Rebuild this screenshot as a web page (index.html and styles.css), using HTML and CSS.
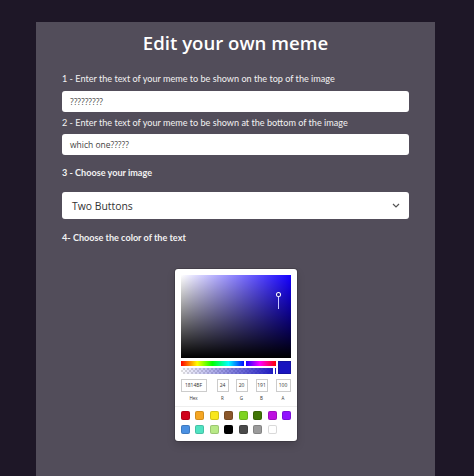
FILE: index.html
```html
<!DOCTYPE html>
<html lang="en">
<head>
  <meta charset="UTF-8">
  <title>Edit your own meme</title>
  <link rel="stylesheet" href="styles.css">
</head>
<body>
  <div class="panel">
    <h1>Edit your own meme</h1>

    <label class="field-label">1 - Enter the text of your meme to be shown on the top of the image</label>
    <div class="text-input">?????????</div>

    <label class="field-label second">2 - Enter the text of your meme to be shown at the bottom of the image</label>
    <div class="text-input">which one?????</div>

    <label class="field-label bold choose">3 - Choose your image</label>
    <div class="select">
      <span>Two Buttons</span>
      <svg width="8" height="5" viewBox="0 0 8 5"><path d="M1 1l3 3 3-3" fill="none" stroke="#555" stroke-width="1.2"/></svg>
    </div>

    <label class="field-label bold color">4- Choose the color of the text</label>

    <div class="picker">
      <div class="saturation">
        <div class="sat-white"></div>
        <div class="sat-black"></div>
        <div class="sat-pointer"></div>
        <div class="sat-line"></div>
      </div>
      <div class="controls">
        <div class="sliders">
          <div class="hue"><div class="hue-pointer"></div></div>
          <div class="alpha"><div class="alpha-fill"></div><div class="alpha-pointer"></div></div>
        </div>
        <div class="active-color"></div>
      </div>
      <div class="fields">
        <div class="f hex"><div class="box">1814BF</div><span>Hex</span></div>
        <div class="f r"><div class="box">24</div><span>R</span></div>
        <div class="f g"><div class="box">20</div><span>G</span></div>
        <div class="f b"><div class="box">191</div><span>B</span></div>
        <div class="f a"><div class="box">100</div><span>A</span></div>
      </div>
      <div class="presets">
        <div class="sw" style="background:#D0021B"></div>
        <div class="sw" style="background:#F5A623"></div>
        <div class="sw" style="background:#F8E71C"></div>
        <div class="sw" style="background:#8B572A"></div>
        <div class="sw" style="background:#7ED321"></div>
        <div class="sw" style="background:#417505"></div>
        <div class="sw" style="background:#BD10E0"></div>
        <div class="sw" style="background:#9013FE"></div>
        <div class="sw" style="background:#4A90E2"></div>
        <div class="sw" style="background:#50E3C2"></div>
        <div class="sw" style="background:#B8E986"></div>
        <div class="sw" style="background:#000000"></div>
        <div class="sw" style="background:#4A4A4A"></div>
        <div class="sw" style="background:#9B9B9B"></div>
        <div class="sw" style="background:#FFFFFF"></div>
      </div>
    </div>
  </div>
</body>
</html>
```

FILE: styles.css
```css
html, body {
  margin: 0;
  height: 100%;
  overflow: hidden;
}
body {
  background-color: #1e1727;
  font-family: "Open Sans", "Noto Sans", sans-serif;
}
.panel {
  width: 347px;
  margin: 22px 0 0 36px;
  padding: 6px 26px 60px;
  background-color: #524d5a;
  min-height: 500px;
}
h1 {
  margin: 0 0 14px;
  color: #fff;
  font-size: 18.6px;
  font-weight: 600;
  text-align: center;
  line-height: 30px;
}
.field-label {
  display: block;
  color: #f2f2f2;
  font-family: Lato, "Open Sans", sans-serif;
  font-size: 9.1px;
  line-height: 14px;
  margin-bottom: 5px;
}
.field-label.second { margin-top: 4px; margin-bottom: 4px; }
.field-label.bold { font-weight: 700; }
.field-label.choose { margin-top: 11px; margin-bottom: 12px; }
.field-label.color { margin-top: 12px; }
.text-input {
  height: 21px;
  background: #fff;
  border-radius: 3px;
  color: #444;
  font-size: 8.5px;
  line-height: 21px;
  padding-left: 8px;
}
.select {
  height: 27px;
  background: #fff;
  border-radius: 3px;
  display: flex;
  align-items: center;
  justify-content: space-between;
  padding: 0 9px 0 10px;
  color: #333;
  font-size: 10.4px;
}
.picker {
  width: 110px;
  margin: 24px auto 0;
  padding: 6px 6px 0;
  background: #fff;
  border-radius: 3px;
  box-shadow: 0 0 0 1px rgba(0,0,0,0.15), 0 4px 8px rgba(0,0,0,0.15);
}
.saturation {
  position: relative;
  height: 83px;
  background: #1400ff;
  overflow: hidden;
}
.sat-white, .sat-black {
  position: absolute;
  inset: 0;
}
.sat-white { background: linear-gradient(to right, #fff, rgba(255,255,255,0)); }
.sat-black { background: linear-gradient(to top, #000, rgba(0,0,0,0)); }
.sat-pointer {
  position: absolute;
  left: 96px;
  top: 18px;
  width: 3px;
  height: 3px;
  border-radius: 50%;
  box-shadow: 0 0 0 1px #fff, inset 0 0 1px 1px rgba(0,0,0,0.3);
}
.sat-line {
  position: absolute;
  left: 97px;
  top: 22px;
  width: 1px;
  height: 12px;
  background: #c8c8ff;
}
.controls {
  display: flex;
  margin-top: 3px;
}
.sliders {
  width: 95px;
}
.hue {
  position: relative;
  height: 5px;
  background: linear-gradient(to right, #f00 0%, #ff0 17%, #0f0 33%, #0ff 50%, #00f 67%, #f0f 83%, #f00 100%);
}
.hue-pointer {
  position: absolute;
  left: 63px;
  top: 0;
  width: 2px;
  height: 5px;
  background: #fff;
}
.alpha {
  position: relative;
  height: 6px;
  margin-top: 2px;
  background-color: #fff;
  background-image: linear-gradient(45deg, #ddd 25%, transparent 25%, transparent 75%, #ddd 75%), linear-gradient(45deg, #ddd 25%, transparent 25%, transparent 75%, #ddd 75%);
  background-size: 4px 4px;
  background-position: 0 0, 2px 2px;
}
.alpha-fill {
  position: absolute;
  inset: 0;
  background: linear-gradient(to right, rgba(24,20,191,0), #1814bf);
}
.alpha-pointer {
  position: absolute;
  right: 1px;
  top: 0;
  width: 2px;
  height: 6px;
  background: #fff;
}
.active-color {
  width: 13px;
  height: 13px;
  margin-left: 2px;
  background: #1814bf;
  box-shadow: inset 0 0 0 1px rgba(0,0,0,0.15);
}
.fields {
  display: flex;
  margin-top: 5px;
  padding-bottom: 5px;
}
.f {
  display: flex;
  flex-direction: column;
  align-items: center;
}
.f .box {
  width: 100%;
  height: 13px;
  box-sizing: border-box;
  box-shadow: inset 0 0 0 1px #ccc;
  font-size: 5px;
  line-height: 13px;
  text-align: center;
  color: #333;
}
.f span {
  margin-top: 3px;
  font-size: 4.5px;
  color: #333;
}
.f.hex { width: 26px; }
.f.r { width: 12px; margin-left: 10px; }
.f.g { width: 12px; margin-left: 7px; }
.f.b { width: 12px; margin-left: 8px; }
.f.a { width: 15px; margin-left: 8px; }
.presets {
  display: flex;
  flex-wrap: wrap;
  margin: 0 -6px;
  padding: 4px 0 2px 6px;
  border-top: 1px solid #eee;
}
.sw {
  width: 9px;
  height: 9px;
  margin: 0 5.5px 5px 0;
  border-radius: 2px;
  box-shadow: inset 0 0 0 1px rgba(0,0,0,0.15);
}
```
